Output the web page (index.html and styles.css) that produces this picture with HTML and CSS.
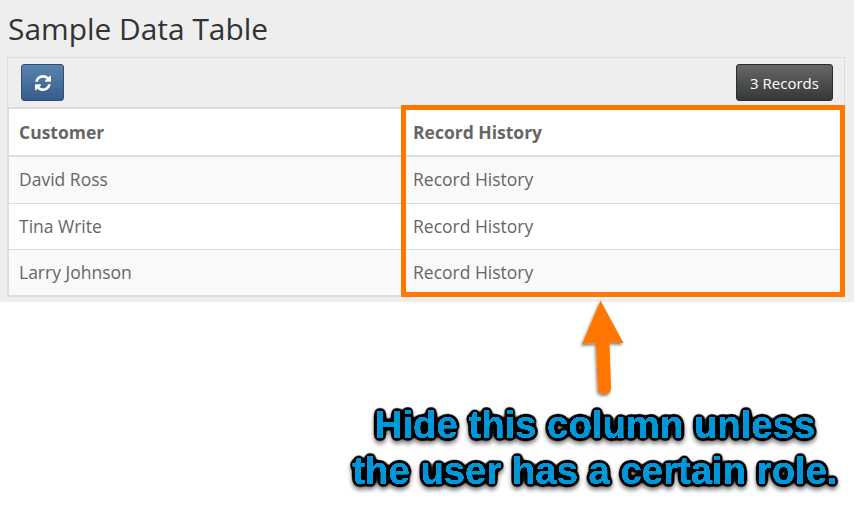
FILE: index.html
```html
<!DOCTYPE html>
<html lang="en">
<head>
<meta charset="utf-8">
<title>Sample Data Table</title>
<link rel="stylesheet" href="styles.css">
</head>
<body>
<main class="shot">
  <section class="page">
    <h1 class="title">Sample Data Table</h1>
    <div class="panel">
      <div class="toolbar">
        <button class="btn-refresh" type="button" aria-label="Refresh">
          <svg viewBox="0 0 1536 1536" width="16" height="16" aria-hidden="true"><path fill="#fff" d="M1511 928q0 5-1 7-64 268-268 434.500T764 1536q-146 0-282.500-55T238 1324l-129 129q-19 19-45 19t-45-19-19-45V960q0-26 19-45t45-19h448q26 0 45 19t19 45-19 45L420 1142q71 66 161 102t187 36q134 0 250-65t186-179q11-17 53-117 8-23 30-23h192q13 0 22.500 9.500t9.500 22.500zM1536 128v448q0 26-19 45t-45 19h-448q-26 0-45-19t-19-45 19-45l138-138Q969 256 768 256q-134 0-250 65T332 500q-11 17-53 117-8 23-30 23H50q-13 0-22.500-9.500T18 608v-7q65-268 270-434.500T768 0q146 0 284 55.500T1297 212l130-129q19-19 45-19t45 19 19 45z"/></svg>
        </button>
        <span class="badge">3 Records</span>
      </div>
      <table class="grid">
        <thead>
          <tr><th>Customer</th><th>Record History</th></tr>
        </thead>
        <tbody>
          <tr class="odd"><td>David Ross</td><td>Record History</td></tr>
          <tr><td>Tina Write</td><td>Record History</td></tr>
          <tr class="odd"><td>Larry Johnson</td><td>Record History</td></tr>
        </tbody>
      </table>
    </div>
  </section>
  <div class="frame"></div>
  <svg class="arrow" viewBox="0 0 60 110" width="60" height="110" aria-hidden="true">
    <defs>
      <filter id="soft" x="-30%" y="-30%" width="160%" height="160%"><feDropShadow dx="-1" dy="2" stdDeviation="1.6" flood-color="#000" flood-opacity=".5"/></filter>
      <filter id="outline" x="-5%" y="-20%" width="110%" height="140%" color-interpolation-filters="sRGB">
        <feGaussianBlur in="SourceAlpha" stdDeviation="2.4" result="wide"/>
        <feComponentTransfer in="wide" result="edge"><feFuncA type="linear" slope="12" intercept="-0.6"/></feComponentTransfer>
        <feGaussianBlur in="edge" stdDeviation="2.2" result="blurred"/>
        <feOffset in="blurred" dx="0" dy="3" result="moved"/>
        <feComponentTransfer in="moved" result="shade"><feFuncA type="linear" slope="0.5"/></feComponentTransfer>
        <feGaussianBlur in="SourceAlpha" stdDeviation="0.7" result="near"/>
        <feComponentTransfer in="near" result="fat"><feFuncA type="linear" slope="4" intercept="-0.4"/></feComponentTransfer>
        <feFlood flood-color="#0097d9"/>
        <feComposite in2="fat" operator="in" result="ink"/>
        <feMerge><feMergeNode in="shade"/><feMergeNode in="edge"/><feMergeNode in="ink"/></feMerge>
      </filter>
    </defs>
    <path filter="url(#soft)" fill="#ff7700" d="M27.500 4.500 L50.500 47 L36.500 46.500 L38 92 Q38 98 31.500 98 Q25 98 24.800 92 L23 47 L9 48 Z"/>
  </svg>
  <p class="callout">Hide this column unless<br>the user has a certain role.</p>
</main>
</body>
</html>
```
FILE: styles.css
```css
* { box-sizing: border-box; }
html, body { margin: 0; padding: 0; background: #fff; }
body { font-family: "Open Sans", "Liberation Sans", sans-serif; }
.shot { position: relative; width: 860px; height: 530px; overflow: hidden; }
.page { width: 854px; height: 302px; background: #eee; padding: 9px 9px 0 7px; }
.title { margin: 0 0 0 1px; font-size: 29.900px; font-weight: 400; line-height: 39px; height: 48px; color: #333; }
.panel { border: 1px solid #ddd; }
.toolbar { display: flex; justify-content: space-between; align-items: center; height: 50px; padding: 0 11px 0 13px; border-bottom: 1px solid #ddd; }
.btn-refresh { display: flex; align-items: center; justify-content: center; width: 43px; height: 37px; padding: 0; border: 1px solid #2f5077; border-radius: 3px; background: linear-gradient(#5a83ae, #365d8a); }
.badge { display: flex; align-items: center; justify-content: center; width: 97px; height: 37px; border: 1px solid #2b2b2b; border-radius: 3px; background: linear-gradient(#666868, #363837); color: #fff; font-size: 15px; }
.grid { width: 100%; border-collapse: separate; border-spacing: 0; table-layout: fixed; border-top: 1px solid #ddd; font-size: 17.500px; color: #666; }
.grid th, .grid td { height: 46px; padding: 0 10px 2px; text-align: left; font-weight: 400; border-bottom: 1px solid #ddd; background: #fff; }
.grid th { height: 48px; padding: 0 10px; font-weight: 700; border-bottom-width: 2px; color: #666; }
.grid th:first-child, .grid td:first-child { width: 395px; border-left: 1px solid #ddd; }
.grid tr.odd td { background: #f9f9f9; }
.grid tbody tr:first-child td { height: 47px; }
.frame { position: absolute; left: 401px; top: 105px; width: 444px; height: 192px; border: 5px solid #ff7700; }
.arrow { position: absolute; left: 573px; top: 296px; }
.callout { position: absolute; left: 335px; top: 402px; width: 520px; margin: 0; text-align: center; font-family: "Liberation Sans", Arial, sans-serif; font-weight: 700; font-size: 38.300px; line-height: 46px; color: #0097d9; filter: url(#outline); white-space: nowrap; }
```
